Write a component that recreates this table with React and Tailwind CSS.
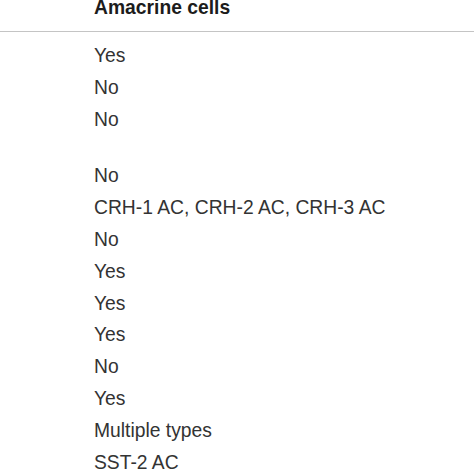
export default function App() {
  const groupA = ["Yes", "No", "No"];
  const groupB = [
    "No",
    "CRH-1 AC, CRH-2 AC, CRH-3 AC",
    "No",
    "Yes",
    "Yes",
    "Yes",
    "No",
    "Yes",
    "Multiple types",
    "SST-2 AC",
  ];
  return (
    <div
      className="w-[474px] h-[474px] overflow-hidden bg-white"
      style={{ fontFamily: '"Liberation Sans", Arial, sans-serif' }}
    >
      <div className="border-b border-[#c4c4c4] pb-[14px]">
        <div className="mt-[-2px] pl-[94px] text-[19.3px] leading-[19px] font-bold text-[#1c1c1c]">
          Amacrine cells
        </div>
      </div>
      <div className="pt-[8px] pl-[94px] text-[19.3px] leading-[31.8px] text-[#333333]">
        {groupA.map((t, i) => (
          <div key={"a" + i}>{t}</div>
        ))}
        <div className="h-[25px]" />
        {groupB.map((t, i) => (
          <div key={"b" + i}>{t}</div>
        ))}
      </div>
    </div>
  );
}
